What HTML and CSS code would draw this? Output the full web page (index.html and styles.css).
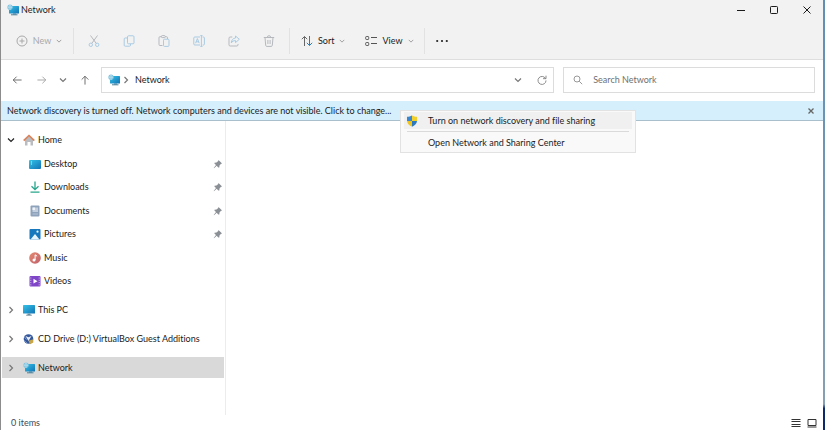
FILE: index.html
```
<!DOCTYPE html>
<html lang="en">
<head>
    <meta charset="UTF-8">
    <meta name="viewport" content="width=device-width, initial-scale=1.0">
    <title>Network</title>
    <link rel="stylesheet" href="styles.css">
</head>
<body>
    <!-- Shared icons -->
    <svg class="sprite" aria-hidden="true">
        <defs>
            <linearGradient id="screen" x1="0" y1="0" x2="1" y2="1">
                <stop offset="0" stop-color="#35c3e8"/>
                <stop offset="1" stop-color="#1173b5"/>
            </linearGradient>
            <linearGradient id="music" x1="0" y1="0" x2="1" y2="1">
                <stop offset="0" stop-color="#e58a70"/>
                <stop offset="1" stop-color="#c0606c"/>
            </linearGradient>
        </defs>
        <symbol id="icon-network" viewBox="0 0 12 12">
            <rect x="2" y="2" width="10" height="7.5" rx="0.5" fill="url(#screen)"/>
            <path d="M6 9.5h3v1H6z" fill="#3b83a8"/>
            <path d="M4 10.8h6.5" stroke="#4b7f98" stroke-width="1"/>
            <circle cx="3" cy="3.2" r="2.6" fill="#7dbfdc"/>
            <path d="M0.6 3.2h4.8M3 0.6c-1.4 1.7-1.4 3.5 0 5.2M3 0.6c1.4 1.7 1.4 3.5 0 5.2" fill="none" stroke="#d3eef8" stroke-width="0.5"/>
        </symbol>
        <symbol id="icon-down" viewBox="0 0 8 8">
            <path d="M1 2.5l3 3 3-3" fill="none" stroke="currentColor" stroke-width="1.2"/>
        </symbol>
        <symbol id="icon-right" viewBox="0 0 8 8">
            <path d="M2.5 1l3 3-3 3" fill="none" stroke="currentColor" stroke-width="1.2"/>
        </symbol>
        <symbol id="icon-pin" viewBox="0 0 10 10">
            <path d="M5.5 1l3.6 3.5-1 .3-1.6 1.7-.2 2-1-.1L3.7 6.8 1 9.2l-.3-.3L3 6.1 1.4 4.5l.1-.8 2-.3L5.2 2z" fill="#8b9096"/>
        </symbol>
    </svg>

    <div class="window">
        <header class="titlebar">
            <svg class="icon"><use href="#icon-network"/></svg>
            <h1>Network</h1>
            <div class="window-controls">
                <button type="button" aria-label="Minimize"><svg viewBox="0 0 10 10"><path d="M1 5.5h8"/></svg></button>
                <button type="button" aria-label="Maximize"><svg viewBox="0 0 10 10"><rect x="1.5" y="1.5" width="7" height="7" rx="0.8"/></svg></button>
                <button type="button" aria-label="Close"><svg viewBox="0 0 10 10"><path d="M1.5 1.5l7 7M8.5 1.5l-7 7"/></svg></button>
            </div>
        </header>

        <div class="toolbar">
            <button type="button" class="tool-label new" disabled>
                <svg class="icon" viewBox="0 0 12 12"><circle cx="6" cy="6" r="5"/><path d="M6 3.5v5M3.5 6h5"/></svg>
                New
                <svg class="caret"><use href="#icon-down"/></svg>
            </button>
            <span class="divider"></span>
            <div class="tool-icons">
                <button type="button" aria-label="Cut" disabled>
                    <svg class="icon" viewBox="0 0 12 12"><path d="M2.5 0.5l5.8 8M9.5 0.5l-5.8 8" stroke="#b5b9be"/><circle cx="2.8" cy="9.8" r="1.7"/><circle cx="9.2" cy="9.8" r="1.7"/></svg>
                </button>
                <button type="button" aria-label="Copy" disabled>
                    <svg class="icon" viewBox="0 0 12 12"><rect x="4.5" y="0.8" width="6.5" height="8" rx="1"/><path d="M4.3 3H2.2a1 1 0 0 0-1 1v6.2a1 1 0 0 0 1 1h4.3a1 1 0 0 0 1-1V9"/></svg>
                </button>
                <button type="button" aria-label="Paste" disabled>
                    <svg class="icon" viewBox="0 0 12 12"><path d="M4.5 10.5H2a1 1 0 0 1-1-1V2.7a1 1 0 0 1 1-1h1.5M7 1.7h1.5a1 1 0 0 1 1 1V4" stroke="#b5b9be"/><rect x="3.4" y="0.6" width="3.8" height="2" rx="0.8" stroke="#b5b9be"/><rect x="5.5" y="4.2" width="5.5" height="7.2" rx="1"/></svg>
                </button>
                <button type="button" aria-label="Rename" disabled>
                    <svg class="icon" viewBox="0 0 12 12"><path d="M7 2H1.8a1 1 0 0 0-1 1v6a1 1 0 0 0 1 1H7M9.6 2h.8a1 1 0 0 1 1 1v6a1 1 0 0 1-1 1h-.8M8.4 0.6v10.8M7.3 0.6h2.2M7.3 11.4h2.2M2.6 8.2l1.8-4.6 1.8 4.6M3.2 6.8h2.4"/></svg>
                </button>
                <button type="button" aria-label="Share" disabled>
                    <svg class="icon" viewBox="0 0 12 12"><path d="M4.3 2H2.2a1.2 1.2 0 0 0-1.2 1.2v6.6A1.2 1.2 0 0 0 2.2 11h6.6a1.2 1.2 0 0 0 1.2-1.2V9" stroke="#b5b9be"/><path d="M7.5 1l3.8 3.3-3.8 3.3v-2C5.4 5.6 4.2 6.3 3.3 8c.1-2.9 1.6-4.7 4.2-5z"/></svg>
                </button>
                <button type="button" aria-label="Delete" disabled>
                    <svg class="icon gray" viewBox="0 0 12 12"><path d="M0.8 2.5h10.4M4.3 2.4a1.7 1.7 0 0 1 3.4 0M2 2.6l.7 7.7a1.2 1.2 0 0 0 1.2 1.1h4.2a1.2 1.2 0 0 0 1.2-1.1L10 2.6M4.9 5v4M7.1 5v4"/></svg>
                </button>
            </div>
            <span class="divider"></span>
            <button type="button" class="tool-label sort">
                <svg class="icon" viewBox="0 0 12 12"><path d="M3.5 11V1.5M0.8 4.2l2.7-2.7 2.7 2.7" stroke="#666"/><path d="M8.5 1v9.5M5.8 7.8l2.7 2.7 2.7-2.7" stroke="#2f7db5"/></svg>
                Sort
                <svg class="caret"><use href="#icon-down"/></svg>
            </button>
            <button type="button" class="tool-label view">
                <svg class="icon" viewBox="0 0 12 12"><rect x="0.7" y="1.5" width="3" height="3" rx="0.8"/><rect x="0.7" y="7.5" width="3" height="3" rx="0.8"/><path d="M6 2.5h6M6 8.5h6"/></svg>
                View
                <svg class="caret"><use href="#icon-down"/></svg>
            </button>
            <span class="divider"></span>
            <button type="button" class="more" aria-label="See more">
                <svg class="icon" viewBox="0 0 12 12"><circle cx="1.2" cy="6" r="1.1"/><circle cx="6" cy="6" r="1.1"/><circle cx="10.8" cy="6" r="1.1"/></svg>
            </button>
        </div>

        <div class="navbar">
            <nav class="history">
                <button type="button" aria-label="Back"><svg viewBox="0 0 12 12"><path d="M11.5 6h-10M5.5 2l-4 4 4 4"/></svg></button>
                <button type="button" class="faded" aria-label="Forward"><svg viewBox="0 0 12 12"><path d="M0.5 6h10M6.5 2l4 4-4 4"/></svg></button>
                <button type="button" class="recent" aria-label="Recent locations"><svg class="caret"><use href="#icon-down"/></svg></button>
                <button type="button" aria-label="Up"><svg viewBox="0 0 12 12"><path d="M6 11.5v-10M2 5.5l4-4 4 4"/></svg></button>
            </nav>
            <div class="address">
                <svg class="icon"><use href="#icon-network"/></svg>
                <svg class="caret"><use href="#icon-right"/></svg>
                <a href="#">Network</a>
                <button type="button" class="previous" aria-label="Previous locations"><svg class="caret"><use href="#icon-down"/></svg></button>
                <button type="button" aria-label="Refresh"><svg viewBox="0 0 12 12"><path d="M10.2 4.2A4.8 4.8 0 1 0 10.8 6.5M10.8 0.8v3.6H7.2"/></svg></button>
            </div>
            <label class="search">
                <svg class="icon" viewBox="0 0 12 12"><circle cx="5" cy="5" r="3"/><path d="M7.2 7.2l3 3"/></svg>
                <input type="search" placeholder="Search Network" aria-label="Search Network">
            </label>
        </div>

        <div class="infobar">
            <button type="button" class="message">Network discovery is turned off. Network computers and devices are not visible. Click to change...</button>
            <button type="button" class="dismiss" aria-label="Dismiss"><svg viewBox="0 0 10 10"><path d="M2.5 2.5l5 5M7.5 2.5l-5 5" stroke-width="1.3"/></svg></button>

            <div class="menu" role="menu">
                <button type="button" class="active" role="menuitem">
                    <svg class="icon" viewBox="0 0 12 12">
                        <path d="M6 0.5C4.5 1.5 2.8 1.8 1 1.8V6h5z" fill="#3a86cf"/>
                        <path d="M6 0.5C7.5 1.5 9.2 1.8 11 1.8V6H6z" fill="#f3cf2c"/>
                        <path d="M1 6c.3 2.8 2.4 4.6 5 5.7V6z" fill="#f0c420"/>
                        <path d="M11 6c-.3 2.8-2.4 4.6-5 5.7V6z" fill="#2c78bf"/>
                    </svg>
                    Turn on network discovery and file sharing
                </button>
                <hr>
                <button type="button" role="menuitem">Open Network and Sharing Center</button>
            </div>
        </div>

        <div class="content">
            <nav class="sidebar">
                <a class="item" href="#">
                    <svg class="caret dark"><use href="#icon-down"/></svg>
                    <svg class="icon" viewBox="0 0 12 12"><path d="M2 5.5L6 2l4 3.5v6H7.5V8h-3v3.5H2z" fill="#b9bdc1"/><path d="M0.7 6.7L6 1.5l5.3 5.2" fill="none" stroke="#d9835c" stroke-width="1.7" stroke-linejoin="round"/></svg>
                    Home
                </a>
                <ul class="pinned">
                    <li><a class="item" href="#">
                        <svg class="icon" viewBox="0 0 12 12"><rect y="2" width="12" height="9" rx="1" fill="url(#screen)"/><path d="M2 4h1M2 6h1" stroke="#d5f2fb"/></svg>
                        Desktop
                        <svg class="pin"><use href="#icon-pin"/></svg>
                    </a></li>
                    <li><a class="item" href="#">
                        <svg class="icon" viewBox="0 0 12 12"><path d="M6 0.5v8M2.5 5.2L6 8.7l3.5-3.5M1.5 11.2h9" fill="none" stroke="#27a68c" stroke-width="1.3"/></svg>
                        Downloads
                        <svg class="pin"><use href="#icon-pin"/></svg>
                    </a></li>
                    <li><a class="item" href="#">
                        <svg class="icon" viewBox="0 0 12 12"><rect x="1.5" y="0.5" width="9" height="11" rx="1" fill="#8fa2bb"/><rect x="3.5" y="2.5" width="5.5" height="4.5" fill="#c3cfde"/><rect x="3.5" y="2.5" width="2.5" height="2.5" fill="#eef3f8"/><path d="M3.5 9h5.5" stroke="#b4c3d6"/></svg>
                        Documents
                        <svg class="pin"><use href="#icon-pin"/></svg>
                    </a></li>
                    <li><a class="item" href="#">
                        <svg class="icon" viewBox="0 0 12 12"><rect x="0.5" y="1" width="11" height="10.5" rx="1" fill="#1878bd"/><path d="M1.5 11.5L6 6l4.5 5.5z" fill="#e9f5fc"/><circle cx="8.5" cy="3.7" r="1.1" fill="#e9f5fc"/></svg>
                        Pictures
                        <svg class="pin"><use href="#icon-pin"/></svg>
                    </a></li>
                    <li><a class="item" href="#">
                        <svg class="icon" viewBox="0 0 12 12"><circle cx="6" cy="6" r="5.8" fill="url(#music)"/><circle cx="5" cy="8" r="1.5" fill="#fff"/><path d="M6.1 8V2.8l2 1.4" fill="none" stroke="#fff"/></svg>
                        Music
                    </a></li>
                    <li><a class="item" href="#">
                        <svg class="icon" viewBox="0 0 12 12"><rect x="0.5" y="1" width="11" height="10.5" rx="1" fill="#8046c8"/><path d="M1.8 2.5v8M10.2 2.5v8" stroke="#d8c4f1" stroke-dasharray="1 1.3"/><path d="M4.5 3.8v4.8l4-2.4z" fill="#fff"/></svg>
                        Videos
                    </a></li>
                </ul>
                <ul class="roots">
                    <li><a class="item" href="#">
                        <svg class="caret"><use href="#icon-right"/></svg>
                        <svg class="icon" viewBox="0 0 12 12"><rect y="1" width="12" height="8.5" rx="0.6" fill="url(#screen)"/><path d="M4.5 9.5h3V11h-3z" fill="#6a94a8"/><path d="M3.2 11.2h5.6" stroke="#62808e" stroke-width="0.9"/></svg>
                        This PC
                    </a></li>
                    <li><a class="item" href="#">
                        <svg class="caret"><use href="#icon-right"/></svg>
                        <svg class="icon" viewBox="0 0 12 12"><circle cx="5.5" cy="6" r="4.8" fill="#34569b"/><path d="M2.5 3l3 1.2 3-1.2-3 5z" fill="#e8eef8"/><path d="M1 7.5l3.5 3M1.5 4l2 2.5" stroke="#7f9fd4"/><path d="M5.5 7.8l4.8-1.6v3.2L7 11.2z" fill="#c5a545"/></svg>
                        CD Drive (D:) VirtualBox Guest Additions
                    </a></li>
                    <li><a class="item selected" href="#" aria-current="page">
                        <svg class="caret"><use href="#icon-right"/></svg>
                        <svg class="icon"><use href="#icon-network"/></svg>
                        Network
                    </a></li>
                </ul>
            </nav>
            <main class="files"></main>
        </div>

        <footer class="statusbar">
            <span>0 items</span>
            <div class="layouts">
                <button type="button" aria-label="Details"><svg viewBox="0 0 10 10"><path d="M0.5 1.5h9M0.5 3.5h9M0.5 6.5h9M0.5 8.5h9"/></svg></button>
                <button type="button" aria-label="Large icons"><svg viewBox="0 0 10 10"><path d="M1 1.5h8v6H1z"/><path d="M0.5 9h9"/></svg></button>
            </div>
        </footer>
    </div>
</body>
</html>
```
FILE: styles.css
```
* {
    box-sizing: border-box;
}

body {
    margin: 0;
    font-family: Lato, "Noto Sans", sans-serif;
    font-size: 9px;
    font-variant-ligatures: none;
    line-height: 12px;
    color: #1b1b1b;
    background: linear-gradient(#5f8fb5, #86a0b4 94%, #0c2a6b 95%);
}

button, input {
    font: inherit;
    font-variant-ligatures: none;
    color: inherit;
    background: none;
    border: none;
    padding: 0;
}

button {
    display: flex;
    align-items: center;
    justify-content: center;
    white-space: nowrap;
}

a {
    color: inherit;
    text-decoration: none;
}

ul {
    margin: 0;
    padding: 0;
    list-style: none;
}

svg {
    display: block;
    flex: none;
    width: 10px;
    height: 10px;
    fill: none;
    stroke: currentColor;
}

use {
    stroke: none;
}

.sprite {
    position: absolute;
    width: 0;
    height: 0;
}

.icon {
    width: 12px;
    height: 12px;
}

.caret {
    width: 8px;
    height: 8px;
    color: #777;
}

.window {
    display: flex;
    flex-direction: column;
    min-height: 100vh;
    margin-right: 2px;
    background: #fff;
    border-left: 1px solid #8c8c8c;
}

/* Title bar */
.titlebar {
    display: flex;
    align-items: center;
    height: 19px;
    padding-left: 6px;
    background: #f2f2f2;
}

.titlebar h1 {
    margin: 0 0 0 2px;
    font-size: inherit;
    font-weight: normal;
}

.window-controls {
    display: flex;
    margin-left: auto;
}

.window-controls button {
    width: 33px;
    height: 18px;
}

/* Toolbar */
.toolbar {
    display: flex;
    align-items: center;
    height: 41px;
    padding: 4px 14px 0 14px;
    background: #f2f2f2;
    border-bottom: 1px solid #dedede;
}

.divider {
    width: 1px;
    height: 26px;
    background: #e2e2e2;
}

.tool-label {
    gap: 5px;
}

.tool-label .caret {
    width: 6px;
    height: 6px;
    color: #999;
}

.new {
    width: 48px;
    margin-right: 10px;
    color: #a9a9a9;
}

.tool-icons {
    display: flex;
    margin-right: 3px;
    margin-left: 2px;
    color: #a9cbe3;
}

.tool-icons button {
    width: 35px;
    height: 26px;
}

.tool-icons .gray {
    color: #b5b9be;
}

.sort {
    margin-left: 11px;
}

.view {
    margin-right: 10px;
    margin-left: 20px;
}

.view .icon {
    color: #555;
}

.more {
    margin-left: 11px;
}

.more svg {
    fill: #222;
    stroke: none;
}

/* Navigation */
.navbar {
    display: flex;
    align-items: center;
    height: 41px;
    padding: 0 8px 2px 0;
}

.history {
    display: flex;
    flex: none;
    width: 100px;
    padding-left: 3px;
    color: #555;
}

.history button {
    width: 25px;
}

.history .recent {
    width: 18px;
}

.history .faded {
    color: #999;
}

.address, .search {
    display: flex;
    align-items: center;
    height: 26px;
    border: 1px solid #dcdcdc;
}

.address {
    flex: 456;
    padding: 0 6px;
}

.address a {
    margin-left: 5px;
}

.address .caret {
    margin-left: 2px;
}

.address button {
    color: #777;
}

.address .previous {
    margin-right: 15px;
    margin-left: auto;
}

.search {
    flex: 251;
    gap: 9px;
    margin-left: 9px;
    padding-left: 8px;
    color: #999;
}

.search input {
    flex: 1;
    min-width: 0;
    outline: none;
}

.search input::placeholder {
    color: #707070;
    opacity: 1;
}

/* Network discovery notice */
.infobar {
    position: relative;
    display: flex;
    align-items: center;
    justify-content: space-between;
    height: 20px;
    padding: 0 7px 0 6px;
    background: #d5effc;
    border-bottom: 1px solid #a9bfcc;
}

.dismiss {
    color: #666;
}

.menu {
    position: absolute;
    top: 9px;
    left: 399px;
    z-index: 1;
    width: 236px;
    padding: 1px 3px;
    background: #f9f9f9;
    border: 1px solid #e2e2e2;
}

.menu button {
    justify-content: flex-start;
    gap: 10px;
    width: 100%;
    height: 17px;
    padding-left: 24px;
}

.menu .active {
    padding-left: 2px;
    background: #f0f0f0;
}

.menu .icon {
    stroke: none;
}

.menu hr {
    margin: 2px 3px;
    border: none;
    border-top: 1px solid #dadada;
}

/* Folder tree */
.content {
    display: flex;
    flex: 1;
}

.sidebar {
    width: 225px;
    padding: 7px 1px 0 1px;
    border-right: 1px solid #ececec;
}

.item {
    display: flex;
    align-items: center;
    gap: 3px;
    height: 23px;
    padding-left: 5px;
}

.item .icon {
    stroke: none;
}

.item .caret + .icon {
    margin-left: 5px;
}

.item .dark {
    color: #222;
}

.pinned {
    display: grid;
    grid-auto-rows: 1fr;
    min-height: 141px;
    margin: 1px 0 6px;
}

.pinned .item {
    padding-left: 27px;
}

.pin {
    margin-right: 1px;
    margin-left: auto;
}

.roots {
    display: grid;
    gap: 8px;
}

.roots .item {
    height: 21px;
}

.selected {
    background: #d9d9d9;
}

/* Status bar */
.statusbar {
    display: flex;
    align-items: center;
    justify-content: space-between;
    height: 15px;
    padding: 0 6px 0 10px;
    color: #3a4a5a;
}

.layouts {
    display: flex;
    gap: 6px;
    color: #333;
}
```
